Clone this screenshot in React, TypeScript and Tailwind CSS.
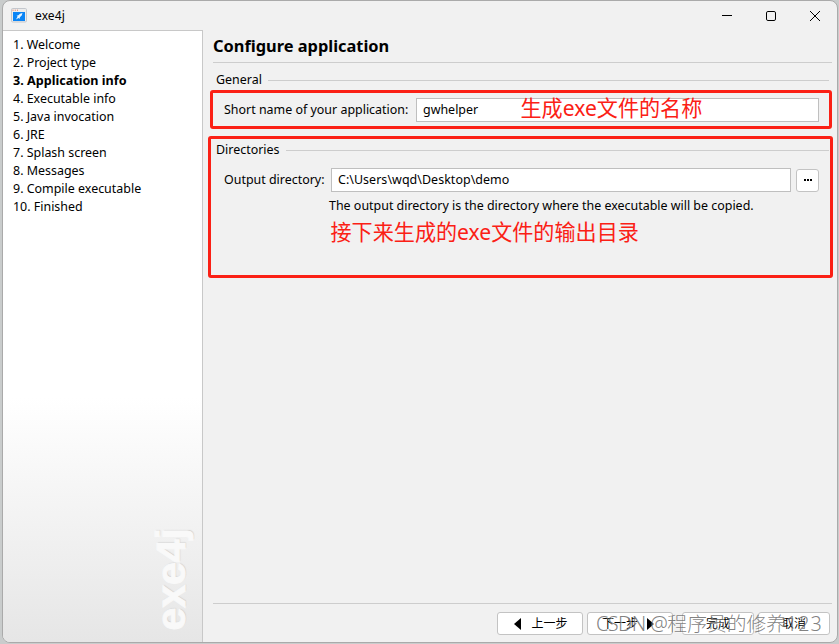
import React from 'react';
import clsx from 'clsx';

const STEPS = [
  'Welcome',
  'Project type',
  'Application info',
  'Executable info',
  'Java invocation',
  'JRE',
  'Splash screen',
  'Messages',
  'Compile executable',
  'Finished',
];

const CURRENT_STEP = 2;

const AppIcon: React.FC = () => (
  <svg width="16" height="15" viewBox="0 0 16 15" className="shrink-0">
    <rect x="0.5" y="0.5" width="15" height="13.5" rx="1.2" fill="#ececec" stroke="#c3c7cd" />
    <path d="M1.5 2.2h1M3.8 2.2h1M6 2.2h1" stroke="#e8714f" />
    <rect x="2" y="4" width="12" height="9" fill="#0a84f5" />
    <path d="M11.5 5 9 5.7 7.4 7.3 5.6 7.8l1 .8L5 11.4l2.6-1.5.9 1.2.4-1.9L10.7 7.4z" fill="#e9f5ff" />
  </svg>
);

const TitleBar: React.FC = () => (
  <header className="flex h-[29px] shrink-0 items-center pl-2">
    <AppIcon />
    <span className="ml-2 text-[12px] tracking-[0.1px]">exe4j</span>
    <svg width="98" height="12" viewBox="0 0 98 12" className="mr-[17px] ml-auto" fill="none" stroke="#000">
      <path d="M0 5.5h10" />
      <rect x="44.5" y="1.5" width="9" height="9" rx="1.4" />
      <path d="M88 1l10 10M98 1l-10 10" />
    </svg>
  </header>
);

const Sidebar: React.FC = () => (
  <aside className="relative w-[200px] shrink-0 border-t border-r border-[#c8c8c8] bg-linear-to-b from-white from-60% to-[#e6e6e6]">
    <ol className="pt-[5px] pl-[10px]">
      {STEPS.map((step, i) => (
        <li
          key={step}
          className={clsx('h-[18px] leading-[18px] whitespace-pre', i === CURRENT_STEP && 'text-[12.6px] font-bold')}
        >
          {i + 1}. {step}
        </li>
      ))}
    </ol>
    <div className="absolute right-[9px] bottom-[11px] rotate-180 font-['Liberation_Sans',sans-serif] text-[41px] leading-[43px] font-bold text-[#f9f9f9] [-webkit-text-stroke:1px_#f9f9f9] [text-shadow:1px_1px_1px_#d2d2d2] [writing-mode:vertical-rl]">
      exe4j
    </div>
  </aside>
);

const GroupTitle: React.FC<{ children: string }> = ({ children }) => (
  <div className="flex h-[18px] items-center gap-[6px] pl-[3px]">
    <h2>{children}</h2>
    <div className="mr-[3px] h-px flex-1 bg-[#cdcdcd]" />
  </div>
);

const Button: React.FC<{ className?: string; children: React.ReactNode }> = ({ className, children }) => (
  <button
    className={clsx(
      'flex h-[23px] items-center justify-center rounded-[3px] border border-[#c3c3c3] bg-white text-[12px] tracking-normal',
      className,
    )}
  >
    {children}
  </button>
);

const Arrow: React.FC<{ right?: boolean }> = ({ right }) => (
  <svg width="7" height="12" viewBox="0 0 7 12" className={clsx(right && 'rotate-180')}>
    <path d="M7 0v12L0 6z" />
  </svg>
);

export default function App() {
  return (
    <div className="relative h-[644px] w-[839px] overflow-hidden bg-[#c9cccc] pl-[2px] font-['Noto_Sans','Noto_Sans_CJK_SC',sans-serif] text-[12.45px] text-black">
      <div className="flex h-[643px] w-[836px] flex-col overflow-hidden rounded-lg border border-[#aaa] bg-[#f1f1f1]">
        <TitleBar />
        <div className="flex flex-1">
          <Sidebar />
          <main className="flex flex-1 flex-col pr-[5px] pl-[10px]">
            <h1 className="h-[33px] border-b border-[#cdcdcd] pt-[5px] text-[16.4px] leading-[22px] font-bold">
              Configure application
            </h1>

            <section className="mt-[8px]">
              <GroupTitle>General</GroupTitle>
              <div className="mt-[9px] flex h-[24px] items-center pl-[11px]">
                <label className="w-[192px] whitespace-nowrap">Short name of your application:</label>
                <div className="mr-[13px] h-[24px] flex-1 border border-[#bfbfbf] bg-white pl-[6px] leading-[22px]">gwhelper</div>
              </div>
            </section>

            <section className="mt-[19px]">
              <GroupTitle>Directories</GroupTitle>
              <div className="mt-[9px] flex h-[24px] items-center pl-[11px]">
                <label className="w-[107px] whitespace-nowrap">Output directory:</label>
                <div className="h-[24px] flex-1 border border-[#bfbfbf] bg-white pl-[6px] leading-[22px] tracking-[0.05px]">
                  C:\Users\wqd\Desktop\demo
                </div>
                <Button className="mr-[13px] ml-[5px] w-[23px]">
                  <svg width="8" height="2" viewBox="0 0 8 2">
                    <path d="M0 0h2v2H0zM3 0h2v2H3zM6 0h2v2H6z" />
                  </svg>
                </Button>
              </div>
              <p className="mt-[5px] pl-[116px] leading-[18px] whitespace-nowrap">
                The output directory is the directory where the executable will be copied.
              </p>
            </section>

            <footer className="mt-auto flex h-[39px] items-start border-t border-[#cdcdcd] pt-[8px] pr-[2px]">
              <Button className="ml-auto w-[86px] gap-[10px] pl-[2px]">
                <Arrow />
                上一步
              </Button>
              <Button className="ml-[4px] w-[86px] gap-[9px] pr-[4px]">
                下一步
                <Arrow right />
              </Button>
              <Button className="ml-[9px] w-[72px]">完成</Button>
              <Button className="ml-[4px] w-[72px]">取消</Button>
            </footer>
          </main>
        </div>
      </div>

      {/* red marker boxes and notes drawn over the window */}
      <div className="absolute top-[90px] left-[210px] h-[39px] w-[622px] rounded-[3px] border-3 border-[#fb2015]" />
      <div className="absolute top-[136px] left-[208px] h-[142px] w-[625px] rounded-[3px] border-3 border-[#fb2015]" />
      <div className="absolute top-[93px] left-[520.5px] text-[21.1px] leading-[30px] whitespace-nowrap text-[#fb2015]">
        生成exe文件的名称
      </div>
      <div className="absolute top-[217px] left-[330.5px] text-[21.1px] leading-[30px] whitespace-nowrap text-[#fb2015]">
        接下来生成的exe文件的输出目录
      </div>
      <div className="absolute top-[609px] left-[596px] text-[19.8px] leading-[30px] font-light whitespace-nowrap text-[#6c6c6c]/85 [text-shadow:1px_1px_0_#fff8]">
        <span className="tracking-[-0.5px]">CSDN @</span>程序员的修养<span className="tracking-[0.9px]">123</span>
      </div>
    </div>
  );
}
